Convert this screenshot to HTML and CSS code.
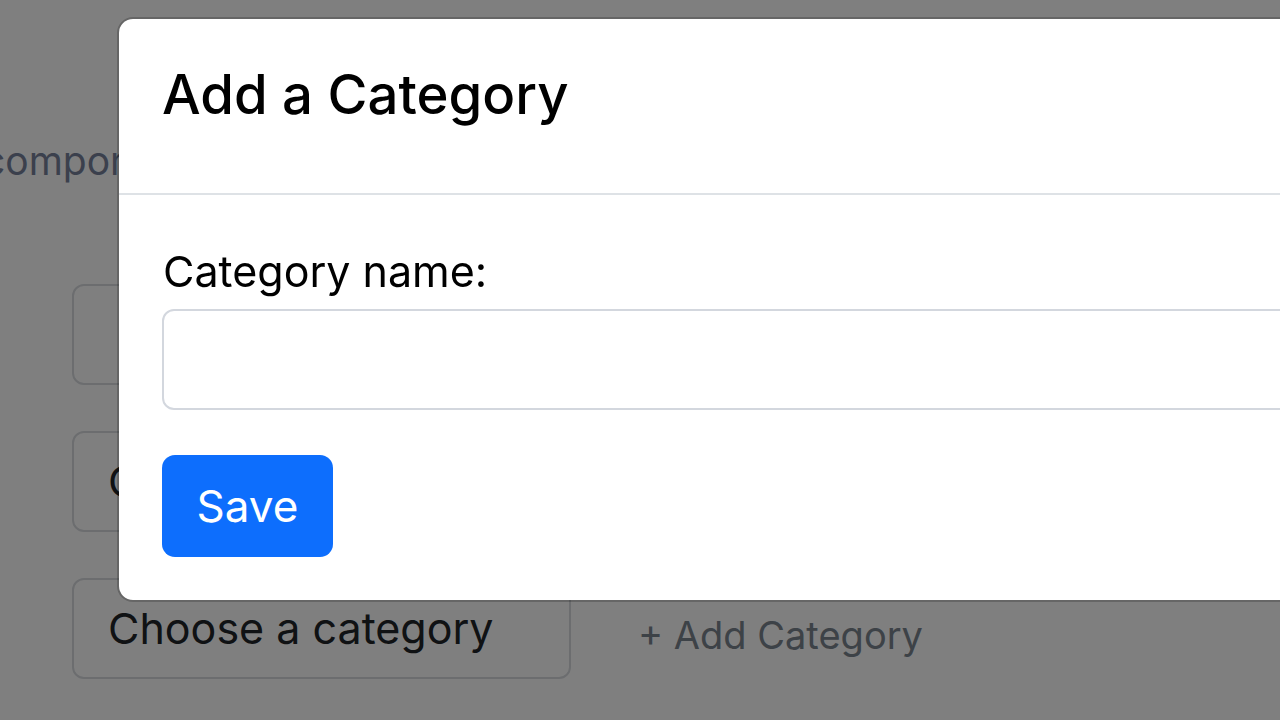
FILE: index.html
```html
<!DOCTYPE html>
<html lang="en">
<head>
<meta charset="utf-8">
<title>Add a Category</title>
<link rel="stylesheet" href="styles.css">
</head>
<body>
<main class="page">
  <p class="intro">component</p>
  <div class="fields">
    <div class="field-row"><div class="select-box"></div></div>
    <div class="field-row"><div class="select-box">Choose a category</div></div>
    <div class="field-row">
      <div class="select-box">Choose a category</div>
      <a class="add-link" href="#">+ Add Category</a>
    </div>
  </div>
</main>
<div class="backdrop"></div>
<div class="modal" role="dialog" aria-labelledby="modal-title">
  <div class="modal-header">
    <h5 class="modal-title" id="modal-title">Add a Category</h5>
  </div>
  <div class="modal-body">
    <label class="form-label" for="cat-name">Category name:</label>
    <input class="form-control" id="cat-name" type="text">
    <button class="btn-primary" type="button">Save</button>
  </div>
</div>
</body>
</html>
```
FILE: styles.css
```css
* { box-sizing: border-box; }
html, body { margin: 0; height: 100%; }
body {
  font-family: Inter, "Noto Sans", "Liberation Sans", sans-serif;
  background: #ffffff;
  color: #212529;
  overflow: hidden;
}
.page {
  padding: 0 0 0 72px;
}
.intro {
  margin: 0 0 0 -89px;
  padding-top: 137px;
  font-size: 39px;
  line-height: 47px;
  color: #76819a;
  white-space: nowrap;
}
.fields {
  display: flex;
  flex-direction: column;
  gap: 46px;
  padding-top: 100px;
}
.field-row {
  display: flex;
  align-items: center;
  gap: 67px;
}
.select-box {
  width: 499px;
  height: 101px;
  border: 2px solid #d8dbdf;
  border-radius: 12px;
  display: flex;
  align-items: center;
  padding-left: 34px;
  padding-bottom: 2px;
  font-size: 43px;
  color: #212529;
}
.add-link {
  font-size: 38px;
  color: #7a848e;
  text-decoration: none;
  padding-top: 12px;
}
.backdrop {
  position: fixed;
  inset: 0;
  background: rgba(0, 0, 0, 0.5);
}
.modal {
  position: fixed;
  left: 117px;
  top: 17px;
  width: 1300px;
  background: #ffffff;
  border: 2px solid rgba(0, 0, 0, 0.2);
  border-radius: 16px;
  background-clip: padding-box;
}
.modal-header {
  height: 176px;
  padding: 42px 44px 0 43px;
  border-bottom: 2px solid #dee2e6;
}
.modal-title {
  margin: 0;
  font-size: 54.5px;
  font-weight: 500;
  line-height: 66px;
  color: #000000;
}
.modal-body {
  padding: 45px 0 43px 43px;
  display: flex;
  flex-direction: column;
  align-items: flex-start;
}
.form-label {
  font-size: 43px;
  line-height: 63px;
  color: #000000;
  padding-left: 1px;
}
.form-control {
  margin-top: 6px;
  width: 1200px;
  height: 101px;
  border: 2px solid #d3d7de;
  border-radius: 12px;
  font: inherit;
  font-size: 44px;
  padding: 0 30px;
  outline: none;
}
.btn-primary {
  margin-top: 45px;
  width: 171px;
  height: 102px;
  border: none;
  border-radius: 13px;
  background: #0d6efd;
  color: #ffffff;
  font-family: inherit;
  font-size: 44px;
  font-weight: 400;
  cursor: pointer;
}
```
